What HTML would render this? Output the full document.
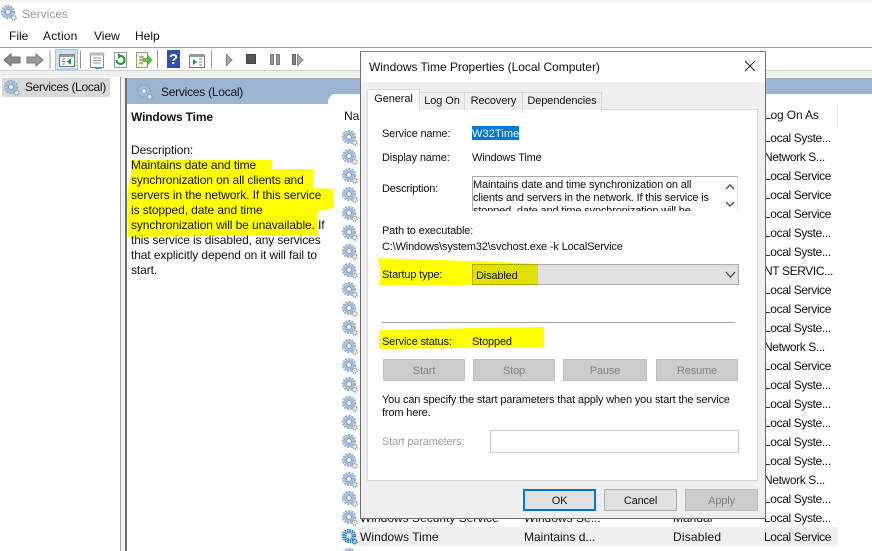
<!DOCTYPE html>
<html><head><meta charset="utf-8">
<style>
*{box-sizing:border-box}
html,body{margin:0;padding:0;width:872px;height:551px;overflow:hidden;background:#fff}
body{position:relative;font-family:"Liberation Sans",sans-serif;font-size:12px;color:#111}
.a{position:absolute;white-space:nowrap;line-height:16px}
.b{position:absolute}
.btn{position:absolute;height:22px;background:#cccccc;border:1px solid #bfbfbf;color:#838383;text-align:center;line-height:22px;font-size:11px;letter-spacing:-.16px}
.tab{position:absolute;background:#f0f0f0;border:1px solid #d9d9d9;border-bottom:none;text-align:center;line-height:17px;white-space:nowrap;font-size:11px;letter-spacing:-.1px}
svg.g{position:absolute;width:17px;height:17px;left:342px}
.t{letter-spacing:-.1px}
.d{font-size:11px;letter-spacing:-.16px;margin-top:1px}
</style></head><body>
<svg width="0" height="0" style="position:absolute"><defs>
<symbol id="gear" viewBox="0 0 17 17">
<circle cx="7" cy="7" r="6.300" fill="none" stroke="#8ea9c6" stroke-width="1.500" stroke-dasharray="2.200 1"/>
<circle cx="7" cy="7" r="4" fill="none" stroke="#a4bcd6" stroke-width="3"/>
<circle cx="7" cy="7" r="2.300" fill="#f4f8fc" stroke="#6f8aa8" stroke-width=".7"/>
<circle cx="12.700" cy="12.700" r="2.400" fill="#e3e7ea" stroke="#8b949c" stroke-width="1.300" stroke-dasharray="1.300 .8"/>
</symbol>
<symbol id="gearb" viewBox="0 0 17 17">
<circle cx="7" cy="7" r="6.300" fill="none" stroke="#1a66bd" stroke-width="1.500" stroke-dasharray="1.500 1"/>
<circle cx="7" cy="7" r="4" fill="none" stroke="#2f7fd0" stroke-width="3" stroke-dasharray="1.500 .6"/>
<circle cx="7" cy="7" r="2.200" fill="#dceaf8"/>
<circle cx="12.700" cy="12.700" r="2.400" fill="#9cc3ea" stroke="#1c5fa8" stroke-width="1.200" stroke-dasharray="1.300 .8"/>
</symbol>
</defs></svg>

<!-- window chrome -->
<div class="b" style="left:0;top:0;width:872px;height:2px;background:#f1f1f1"></div>
<svg class="b" style="left:1px;top:5px" width="17" height="17"><use href="#gear"/></svg>
<div class="a" style="left:22px;top:6px;color:#9a9a9a">Services</div>
<div class="a" style="left:9px;top:28px">File</div>
<div class="a" style="left:43px;top:28px;letter-spacing:.2px">Action</div>
<div class="a" style="left:94px;top:28px">View</div>
<div class="a" style="left:135px;top:28px">Help</div>

<div class="b" style="left:0;top:47px;width:872px;height:1px;background:#a0a0a0"></div>
<div class="b" style="left:0;top:70px;width:872px;height:7px;background:#f0f0f0;border-top:1px solid #d0d0d0"></div>

<!-- toolbar -->
<svg class="b" style="left:0;top:48px" width="330" height="22">
<path d="M4 12 L11 6 V9 H20 V15 H11 V18 Z" fill="#8a8a8a" stroke="#6f6f6f"/>
<path d="M43 12 L36 6 V9 H27 V15 H36 V18 Z" fill="#9a9a9a" stroke="#777"/>
<rect x="49.500" y="2.500" width="1" height="18" fill="#9a9a9a"/>
<rect x="55.500" y="1.500" width="22" height="20" fill="#cde4f7" stroke="#9cc7ea"/>
<rect x="59.500" y="6.500" width="15" height="12" fill="#fff" stroke="#777"/>
<rect x="59.500" y="6.500" width="15" height="2.500" fill="#9a9a9a"/>
<path d="M62 11h3M62 13.500h3M62 16h3" stroke="#888"/>
<path d="M71 10 V17 L67 13.500 Z" fill="#1c9a3a"/>
<rect x="80" y="2.500" width="1" height="18" fill="#9a9a9a"/>
<rect x="90.500" y="5.500" width="13" height="14" fill="#fff" stroke="#8c8c8c"/>
<rect x="89.500" y="4.500" width="15" height="3" fill="#bbb"/>
<path d="M93 10h8M93 12.500h8M93 15h8" stroke="#8899aa"/>
<rect x="95" y="19" width="7" height="2" fill="#3ba0e0"/>
<rect x="114.500" y="4.500" width="12" height="15" fill="#fff" stroke="#9a9a9a"/>
<path d="M120.500 8 a4 4 0 1 1 -4 4" fill="none" stroke="#22a030" stroke-width="2.200"/>
<path d="M118 11 l4 -3 -4 -3z" fill="#22a030"/>
<rect x="136.500" y="4.500" width="11" height="15" fill="#fbf6d8" stroke="#9a9a9a"/>
<path d="M139 9h5M139 12h4M139 15h4" stroke="#666"/>
<path d="M143 10.500h5v-3l4 4.500-4 4.500v-3h-5z" fill="#5cc34a" stroke="#3b9a33" stroke-width=".6"/>
<rect x="157" y="2.500" width="1" height="18" fill="#9a9a9a"/>
<rect x="167" y="2" width="13" height="18" fill="#2f4fb8"/>
<text x="173.500" y="16" font-family="Liberation Sans" font-size="15" font-weight="bold" fill="#fff" text-anchor="middle">?</text>
<rect x="189.500" y="7.500" width="15" height="12" fill="#fff" stroke="#777"/>
<rect x="189.500" y="6" width="15" height="3" fill="#999"/>
<path d="M193 11 V17 L197 14 Z" fill="#1c9a3a"/>
<path d="M199 11h3M199 14h3M199 17h3" stroke="#888"/>
<rect x="211" y="2.500" width="1" height="18" fill="#9a9a9a"/>
<path d="M226.500 6.500 L232 12 L226.500 17.500 Z" fill="#a8a8a8" stroke="#888"/>
<rect x="246.500" y="7" width="9" height="9" fill="#555" stroke="#444" transform="translate(0 -.5)"/>
<rect x="270.500" y="6.500" width="3" height="10" fill="#999" stroke="#777"/>
<rect x="276.500" y="6.500" width="3" height="10" fill="#999" stroke="#777"/>
<rect x="292.500" y="6.500" width="3" height="10" fill="#888" stroke="#666"/>
<path d="M297.500 6.500 L303 12 L297.500 17.500 Z" fill="#a8a8a8" stroke="#888"/>
</svg>

<!-- left pane -->
<div class="b" style="left:120px;top:77px;width:5px;height:474px;background:#f0f0f0;border-left:1px solid #a0a0a0"></div>
<div class="b" style="left:2px;top:78px;width:108px;height:19px;background:#d9d9d9"></div>
<svg class="b" style="left:4px;top:80px" width="17" height="17"><use href="#gear"/></svg>
<div class="a" style="left:25px;top:79px;letter-spacing:-.32px">Services (Local)</div>

<!-- right panel -->
<div class="b" style="left:125px;top:78px;width:2px;height:473px;background:#6d6d6d"></div>
<div class="b" style="left:127px;top:78px;width:745px;height:16px;background:#9bb5d2"></div>
<div class="b" style="left:127px;top:94px;width:205px;height:10px;background:#9bb5d2"></div>
<div class="b" style="left:328px;top:94px;width:16px;height:10px;background:#fff;border-top-left-radius:8px"></div>
<svg class="b" style="left:137px;top:84px" width="17" height="17"><use href="#gear"/></svg>
<div class="a" style="left:161px;top:84px;letter-spacing:-.25px">Services (Local)</div>

<div class="a" style="left:131px;top:109px;font-weight:bold;letter-spacing:-.15px">Windows Time</div>
<div class="a t" style="left:131px;top:142px">Description:</div>
<div class="a t" style="left:131px;top:158px;line-height:15px">Maintains date and time<br>synchronization on all clients and<br>servers in the network. If this service<br>is stopped, date and time<br>synchronization will be unavailable. If<br>this service is disabled, any services<br>that explicitly depend on it will fail to<br>start.</div>

<!-- list -->
<div class="a" style="left:344px;top:108px">Na</div>
<div class="b" style="left:837px;top:104px;width:1px;height:24px;background:#e5e5e5"></div>
<div class="a" style="left:764px;top:107px;letter-spacing:-.15px">Log On As</div>

<svg class="g" style="top:130px"><use href="#gear"/></svg>
<svg class="g" style="top:149px"><use href="#gear"/></svg>
<svg class="g" style="top:168px"><use href="#gear"/></svg>
<svg class="g" style="top:187px"><use href="#gear"/></svg>
<svg class="g" style="top:206px"><use href="#gear"/></svg>
<svg class="g" style="top:225px"><use href="#gear"/></svg>
<svg class="g" style="top:244px"><use href="#gear"/></svg>
<svg class="g" style="top:263px"><use href="#gear"/></svg>
<svg class="g" style="top:282px"><use href="#gear"/></svg>
<svg class="g" style="top:301px"><use href="#gear"/></svg>
<svg class="g" style="top:320px"><use href="#gear"/></svg>
<svg class="g" style="top:339px"><use href="#gear"/></svg>
<svg class="g" style="top:358px"><use href="#gear"/></svg>
<svg class="g" style="top:377px"><use href="#gear"/></svg>
<svg class="g" style="top:396px"><use href="#gear"/></svg>
<svg class="g" style="top:415px"><use href="#gear"/></svg>
<svg class="g" style="top:434px"><use href="#gear"/></svg>
<svg class="g" style="top:453px"><use href="#gear"/></svg>
<svg class="g" style="top:472px"><use href="#gear"/></svg>
<svg class="g" style="top:491px"><use href="#gear"/></svg>
<svg class="g" style="top:510px"><use href="#gear"/></svg>
<svg class="g" style="top:548px"><use href="#gear"/></svg>

<div class="b" style="left:358px;top:527px;width:480px;height:19px;background:#f0f0f0"></div>
<svg class="g" style="top:529px"><use href="#gearb"/></svg>
<div class="a" style="left:360px;top:510px">Windows Security Service</div>
<div class="a" style="left:524px;top:510px">Windows Se...</div>
<div class="a" style="left:673px;top:510px">Manual</div>
<div class="a" style="left:360px;top:529px;letter-spacing:.05px">Windows Time</div>
<div class="a" style="left:524px;top:529px">Maintains d...</div>
<div class="a" style="left:673px;top:529px;letter-spacing:.2px">Disabled</div>

<div class="a" style="left:764px;top:129px;line-height:19px;letter-spacing:-.38px">Local Syste...<br>Network S...<br>Local Service<br>Local Service<br>Local Service<br>Local Syste...<br>Local Syste...<br>NT SERVIC...<br>Local Service<br>Local Service<br>Local Syste...<br>Network S...<br>Local Service<br>Local Syste...<br>Local Syste...<br>Local Syste...<br>Local Syste...<br>Local Syste...<br>Network S...<br>Local Syste...<br>Local Syste...<br>Local Service</div>

<!-- dialog -->
<div class="b" style="left:360px;top:51px;width:406px;height:468px;background:#f0f0f0;border:1px solid #6e6e6e;border-top-color:#808080"></div>
<div class="b" style="left:361px;top:52px;width:404px;height:30px;background:#fff"></div>
<div class="a" style="left:369px;top:59px;letter-spacing:-.03px">Windows Time Properties (Local Computer)</div>
<svg class="b" style="left:744px;top:60px" width="12" height="12"><path d="M1 1 L11 11 M11 1 L1 11" stroke="#222" stroke-width="1.100"/></svg>

<!-- tabs -->
<div class="b" style="left:367px;top:109px;width:391px;height:372px;background:#fff;border:1px solid #d9d9d9"></div>
<div class="tab" style="left:419px;top:92px;width:46px;height:18px">Log On</div>
<div class="tab" style="left:464px;top:92px;width:59px;height:18px">Recovery</div>
<div class="tab" style="left:522px;top:92px;width:80px;height:18px">Dependencies</div>
<div class="tab" style="left:367px;top:89px;width:53px;height:21px;background:#fff;line-height:18px">General</div>

<div class="a d" style="left:382px;top:125px">Service name:</div>
<div class="b" style="left:472px;top:126px;width:47px;height:14px;background:#0078d7"></div>
<div class="a d" style="left:472px;top:125px;color:#fff;letter-spacing:.1px">W32Time</div>
<div class="a d" style="left:382px;top:149px">Display name:</div>
<div class="a d" style="left:472px;top:149px">Windows Time</div>
<div class="a d" style="left:382px;top:180px">Description:</div>
<div class="b" style="left:472px;top:176px;width:266px;height:35px;border:1px solid #a9a9a9;border-bottom:none;border-right-color:#e5e5e5;overflow:hidden;background:#fff"><div class="a d" style="left:0;top:1px;line-height:13px;width:250px">Maintains date and time synchronization on all<br>clients and servers in the network. If this service is<br>stopped, date and time synchronization will be</div></div>
<svg class="b" style="left:725px;top:183px" width="10" height="26"><path d="M1 6 L5 2 L9 6 M1 19 L5 23 L9 19" fill="none" stroke="#555" stroke-width="1.500"/></svg>

<div class="a d" style="left:382px;top:222px">Path to executable:</div>
<div class="a d" style="left:382px;top:238px">C:\Windows\system32\svchost.exe -k LocalService</div>

<div class="a d" style="left:382px;top:266px">Startup type:</div>
<div class="b" style="left:472px;top:264px;width:267px;height:21px;background:#e1e1e1;border:1px solid #adadad"></div>
<div class="a d" style="left:476px;top:267px">Disabled</div>
<svg class="b" style="left:725px;top:271px" width="11" height="8"><path d="M1 1 L5.500 6 L10 1" fill="none" stroke="#444" stroke-width="1.200"/></svg>

<div class="b" style="left:382px;top:322px;width:353px;height:1px;background:#a0a0a0"></div>
<div class="a d" style="left:382px;top:333px">Service status:</div>
<div class="a d" style="left:472px;top:333px">Stopped</div>

<div class="btn" style="left:383px;top:359px;width:82px">Start</div>
<div class="btn" style="left:473px;top:359px;width:82px">Stop</div>
<div class="btn" style="left:563px;top:359px;width:84px">Pause</div>
<div class="btn" style="left:656px;top:359px;width:82px">Resume</div>

<div class="a d" style="left:382px;top:391px">You can specify the start parameters that apply when you start the service</div>
<div class="a d" style="left:382px;top:404px">from here.</div>
<div class="a d" style="left:382px;top:433px;color:#a0a0a0">Start parameters:</div>
<div class="b" style="left:490px;top:430px;width:249px;height:23px;background:#fff;border:1px solid #cfcfcf"></div>

<div class="btn" style="left:523px;top:489px;width:73px;background:#e1e1e1;border:2px solid #0078d7;color:#111;line-height:20px">OK</div>
<div class="btn" style="left:604px;top:489px;width:73px;background:#e1e1e1;border-color:#adadad;color:#111">Cancel</div>
<div class="btn" style="left:685px;top:489px;width:73px">Apply</div>

<!-- highlighter -->
<svg class="b" style="left:0;top:0;mix-blend-mode:multiply" width="872" height="551">
<path fill="#ffff00" d="M131 160 L272 160 L272 169 L313 169 L313 188 L333 189 L333 208 L317 212 L317 235 L128 237 L127 205 L128 188 L131 172 Z"/>
<path fill="#ffff00" d="M378 258 L500 262 L538 264 L538 285 L378 285 L381 278 Z"/>
<path fill="#ffff00" d="M379 330 L478 328 L544 327 L544 347 L379 349 Z"/>
</svg>
</body></html>
